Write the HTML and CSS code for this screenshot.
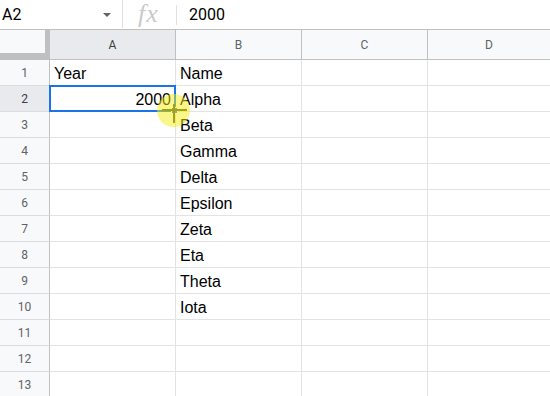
FILE: index.html
```html
<!DOCTYPE html>
<html>
<head>
<meta charset="utf-8">
<link rel="stylesheet" href="styles.css">
</head>
<body>
<div class="app">
  <div class="formula-bar">
    <div class="namebox"><span class="ref">A2</span><span class="caret"></span></div>
    <div class="sep tall"></div>
    <div class="fx">fx</div>
    <div class="sep short"></div>
    <div class="value">2000</div>
  </div>
  <div class="sheet">
    <div class="corner"><div class="corner-inner"></div></div>
    <div class="colhead selected">A</div>
    <div class="colhead">B</div>
    <div class="colhead">C</div>
    <div class="colhead last">D</div>

    <div class="rowhead">1</div><div class="cell">Year</div><div class="cell">Name</div><div class="cell"></div><div class="cell last"></div>
    <div class="rowhead selected">2</div><div class="cell num">2000</div><div class="cell">Alpha</div><div class="cell"></div><div class="cell last"></div>
    <div class="rowhead">3</div><div class="cell"></div><div class="cell">Beta</div><div class="cell"></div><div class="cell last"></div>
    <div class="rowhead">4</div><div class="cell"></div><div class="cell">Gamma</div><div class="cell"></div><div class="cell last"></div>
    <div class="rowhead">5</div><div class="cell"></div><div class="cell">Delta</div><div class="cell"></div><div class="cell last"></div>
    <div class="rowhead">6</div><div class="cell"></div><div class="cell">Epsilon</div><div class="cell"></div><div class="cell last"></div>
    <div class="rowhead">7</div><div class="cell"></div><div class="cell">Zeta</div><div class="cell"></div><div class="cell last"></div>
    <div class="rowhead">8</div><div class="cell"></div><div class="cell">Eta</div><div class="cell"></div><div class="cell last"></div>
    <div class="rowhead">9</div><div class="cell"></div><div class="cell">Theta</div><div class="cell"></div><div class="cell last"></div>
    <div class="rowhead">10</div><div class="cell"></div><div class="cell">Iota</div><div class="cell"></div><div class="cell last"></div>
    <div class="rowhead">11</div><div class="cell"></div><div class="cell"></div><div class="cell"></div><div class="cell last"></div>
    <div class="rowhead">12</div><div class="cell"></div><div class="cell"></div><div class="cell"></div><div class="cell last"></div>
    <div class="rowhead">13</div><div class="cell"></div><div class="cell"></div><div class="cell"></div><div class="cell last"></div>
  </div>

  <div class="selection"></div>
  <div class="fill-handle"></div>
  <div class="cursor-h"></div>
  <div class="cursor-v"></div>
  <div class="highlight"></div>
</div>
</body>
</html>
```
FILE: styles.css
```css
html, body {
  margin: 0;
  padding: 0;
  background: #ffffff;
  overflow: hidden;
}

.app {
  position: relative;
  width: 550px;
  height: 396px;
  overflow: hidden;
  font-family: "Liberation Sans", Arial, sans-serif;
}

/* formula bar */
.formula-bar {
  display: flex;
  align-items: stretch;
  height: 29px;
  border-bottom: 1px solid #c0c0c0;
  font-family: Roboto, "Liberation Sans", sans-serif;
  font-size: 16px;
  color: #000;
}

.namebox {
  width: 122px;
  box-sizing: border-box;
  padding-left: 2px;
  padding-right: 11px;
  display: flex;
  align-items: center;
  justify-content: space-between;
}

.caret {
  width: 0;
  height: 0;
  border-left: 4px solid transparent;
  border-right: 4px solid transparent;
  border-top: 4px solid #5f6368;
  margin-top: 1px;
}

.sep {
  width: 1px;
  background: #e0e0e0;
}

.sep.tall {
  margin: 0 0 1px 0;
}

.sep.short {
  margin: 5px 0 4px 0;
}

.fx {
  width: 53px;
  display: flex;
  align-items: center;
  justify-content: center;
  padding-right: 2px;
  box-sizing: border-box;
  font-family: "Liberation Serif", "DejaVu Serif", serif;
  font-style: italic;
  font-size: 26px;
  letter-spacing: 1px;
  color: #cacaca;
  padding-bottom: 2px;
}

.value {
  display: flex;
  align-items: center;
  padding-left: 12px;
}

/* grid */
.sheet {
  display: grid;
  grid-template-columns: 50px 126px 126px 126px 1fr;
  grid-template-rows: 30px repeat(13, 26px);
}

.sheet > div {
  box-sizing: border-box;
}

.corner {
  background: #c0c0c0;
  position: relative;
}

.corner-inner {
  width: 45px;
  height: 23px;
  background: #f8f9fa;
}

.colhead {
  background: #f8f9fa;
  border-right: 1px solid #c0c0c0;
  border-bottom: 1px solid #c0c0c0;
  display: flex;
  align-items: center;
  justify-content: center;
  font-family: Roboto, "Liberation Sans", sans-serif;
  font-size: 12px;
  color: #5f6368;
}

.colhead.selected,
.rowhead.selected {
  background: #e8eaed;
  color: #3c4043;
}

.colhead.last {
  border-right: none;
}

.rowhead {
  background: #f8f9fa;
  border-right: 1px solid #c0c0c0;
  border-bottom: 1px solid #dadce0;
  display: flex;
  align-items: center;
  justify-content: center;
  font-family: Roboto, "Liberation Sans", sans-serif;
  font-size: 12px;
  color: #5f6368;
}

.cell {
  border-right: 1px solid #e2e3e3;
  border-bottom: 1px solid #e2e3e3;
  display: flex;
  align-items: flex-end;
  padding: 0 3px 2px 4px;
  font-size: 16px;
  line-height: 18px;
  color: #000;
  white-space: nowrap;
  overflow: hidden;
}

.cell.num {
  justify-content: flex-end;
  padding-right: 4px;
}

.cell.last {
  border-right: none;
}

/* overlays */
.selection {
  position: absolute;
  left: 49px;
  top: 85px;
  width: 127px;
  height: 27px;
  box-sizing: border-box;
  border: 2px solid #1a73e8;
}

.fill-handle {
  position: absolute;
  left: 171px;
  top: 107px;
  width: 7px;
  height: 7px;
  background: #1a73e8;
  border: 1px solid #ffffff;
  box-sizing: border-box;
}

.cursor-h {
  position: absolute;
  left: 162px;
  top: 109px;
  width: 25px;
  height: 2px;
  background: #55550a;
}

.cursor-v {
  position: absolute;
  left: 173px;
  top: 104px;
  width: 2px;
  height: 19px;
  background: #55550a;
}

.highlight {
  position: absolute;
  left: 157px;
  top: 94px;
  width: 33px;
  height: 33px;
  border-radius: 50%;
  background: rgba(245, 238, 20, 0.5);
}
```
